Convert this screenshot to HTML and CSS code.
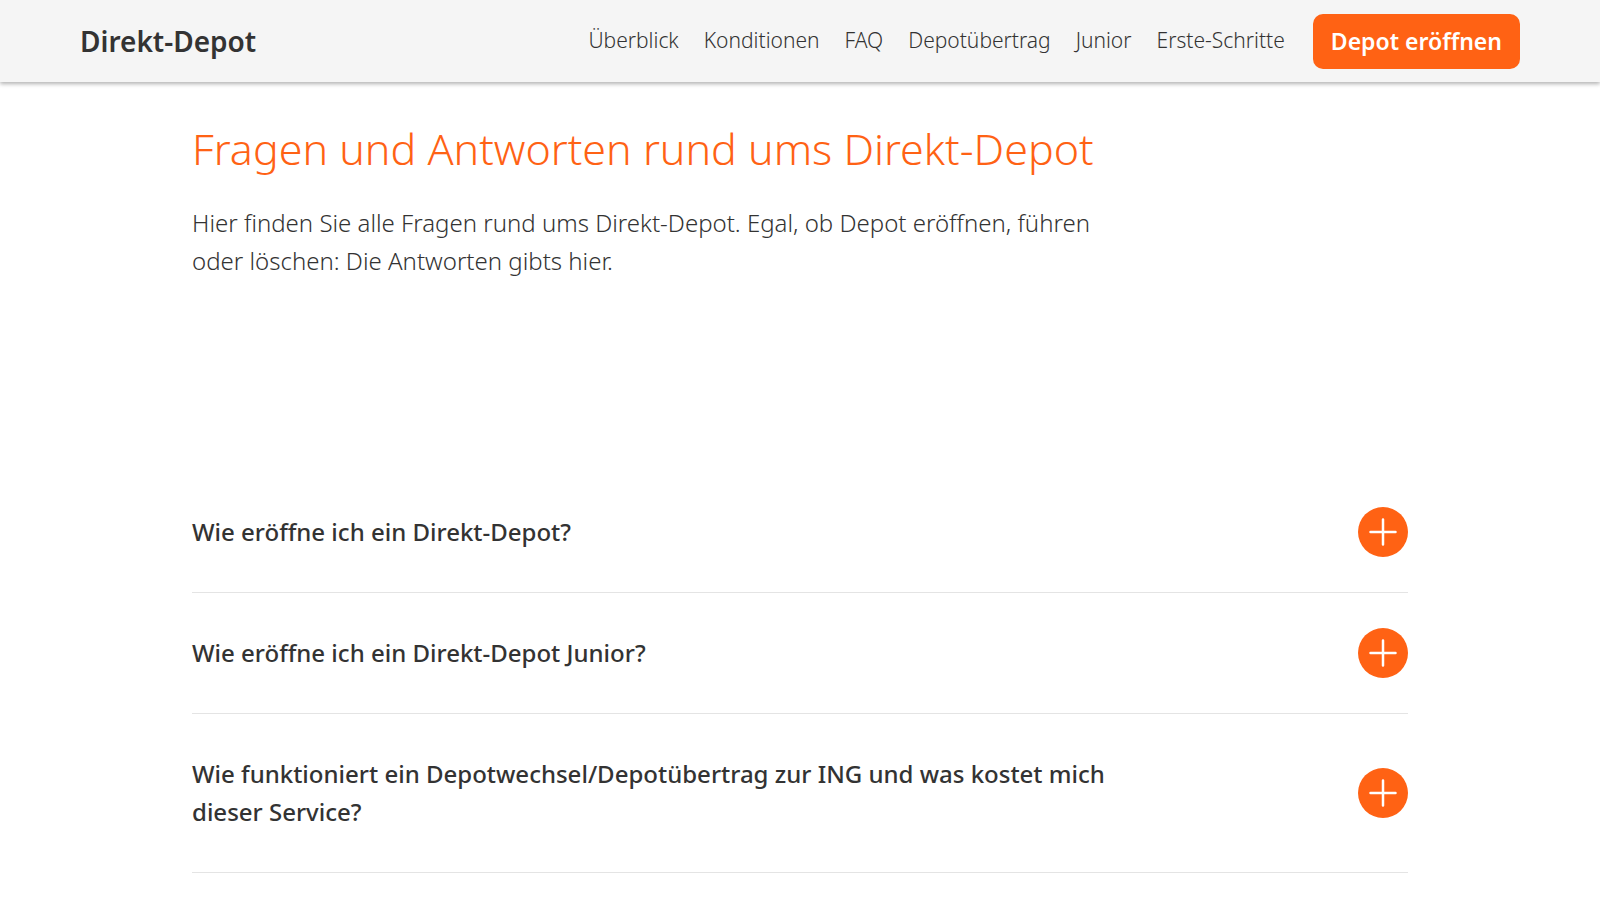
FILE: index.html
```html
<!DOCTYPE html>
<html lang="de">
<head>
  <meta charset="UTF-8">
  <meta name="viewport" content="width=device-width, initial-scale=1.0">
  <title>Direkt-Depot - FAQ</title>
  <link rel="stylesheet" href="styles.css">
</head>
<body>
  <header class="page-header">
    <div class="brand">Direkt-Depot</div>
    <div class="header-right">
      <nav class="nav">
        <a href="#">Überblick</a>
        <a href="#">Konditionen</a>
        <a href="#">FAQ</a>
        <a href="#">Depotübertrag</a>
        <a href="#">Junior</a>
        <a href="#">Erste-Schritte</a>
      </nav>
      <a class="cta" href="#">Depot eröffnen</a>
    </div>
  </header>

  <main class="content">
    <section class="intro">
      <h1>Fragen und Antworten rund ums Direkt-Depot</h1>
      <p>Hier finden Sie alle Fragen rund ums Direkt-Depot. Egal, ob Depot eröffnen, führen oder löschen: Die Antworten gibts hier.</p>
    </section>

    <section class="faq">
      <h2 class="faq-item">
        <button class="faq-toggle" type="button" aria-expanded="false">
          <span class="question">Wie eröffne ich ein Direkt-Depot?</span>
          <svg class="plus" viewBox="0 0 50 50" aria-hidden="true">
            <circle cx="25" cy="25" r="25"/>
            <path d="M12.5 25h25M25 12.5v25"/>
          </svg>
        </button>
      </h2>
      <h2 class="faq-item">
        <button class="faq-toggle" type="button" aria-expanded="false">
          <span class="question">Wie eröffne ich ein Direkt-Depot Junior?</span>
          <svg class="plus" viewBox="0 0 50 50" aria-hidden="true">
            <circle cx="25" cy="25" r="25"/>
            <path d="M12.5 25h25M25 12.5v25"/>
          </svg>
        </button>
      </h2>
      <h2 class="faq-item">
        <button class="faq-toggle" type="button" aria-expanded="false">
          <span class="question">Wie funktioniert ein Depotwechsel/Depotübertrag zur ING und was kostet mich dieser Service?</span>
          <svg class="plus" viewBox="0 0 50 50" aria-hidden="true">
            <circle cx="25" cy="25" r="25"/>
            <path d="M12.5 25h25M25 12.5v25"/>
          </svg>
        </button>
      </h2>
    </section>
  </main>
</body>
</html>
```

FILE: styles.css
```css
* {
  box-sizing: border-box;
  margin: 0;
  padding: 0;
}

body {
  font-family: "Noto Sans", "Open Sans", sans-serif;
  font-weight: 300;
  background: #fff;
  color: #333;
}

.page-header {
  display: flex;
  justify-content: space-between;
  align-items: center;
  padding: 14px 5% 13px;
  background: #f5f5f5;
  box-shadow: 0 2px 4px rgba(0, 0, 0, 0.3);
}

.brand {
  padding-bottom: 2px;
  font-size: 28px;
  font-weight: 600;
}

.header-right {
  display: flex;
  align-items: center;
  gap: 28px;
}

.nav {
  display: flex;
  gap: 25px;
  padding-bottom: 4px;
  font-size: 21px;
}

.nav a {
  color: #333;
  text-decoration: none;
}

.cta {
  padding: 0 18px;
  border-radius: 10px;
  background: #ff6214;
  color: #fff;
  font-size: 23px;
  font-weight: 600;
  line-height: 55px;
  text-decoration: none;
}

.content {
  padding: 36px 12% 0;
}

.intro {
  max-width: 940px;
  margin-bottom: 192px;
}

.intro h1 {
  margin-bottom: 24px;
  color: #ff6214;
  font-size: 43px;
  font-weight: 300;
  line-height: 62px;
}

.intro p {
  font-size: 24px;
  line-height: 38px;
}

.faq-item {
  border-bottom: 1px solid #e4e4e4;
}

.faq-toggle {
  display: flex;
  justify-content: space-between;
  align-items: center;
  width: 100%;
  padding: 41px 0;
  border: none;
  background: none;
  color: #333;
  font-family: inherit;
  font-size: 24px;
  font-weight: 500;
  line-height: 38px;
  text-align: left;
  cursor: pointer;
}

.question {
  max-width: 940px;
}

.plus {
  flex: none;
  width: 50px;
  height: 50px;
  margin: -6px 0;
}

.plus circle {
  fill: #ff6214;
}

.plus path {
  fill: none;
  stroke: #fff;
  stroke-width: 2.5;
  stroke-linecap: round;
}
```
